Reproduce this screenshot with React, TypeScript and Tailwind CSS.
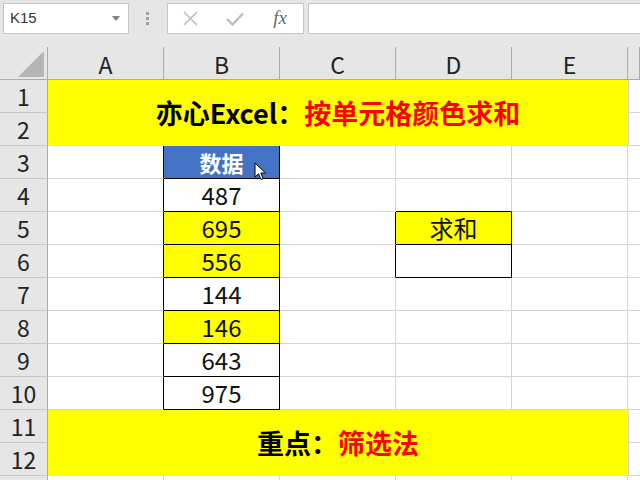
import React from "react";

const FONT = { fontFamily: '"Noto Sans CJK SC", "Noto Sans", sans-serif' };

const dataRows: { row: number; value: string; fill: "white" | "yellow" }[] = [
  { row: 4, value: "487", fill: "white" },
  { row: 5, value: "695", fill: "yellow" },
  { row: 6, value: "556", fill: "yellow" },
  { row: 7, value: "144", fill: "white" },
  { row: 8, value: "146", fill: "yellow" },
  { row: 9, value: "643", fill: "white" },
  { row: 10, value: "975", fill: "white" },
];

function RowHead({ n }: { n?: number }) {
  return (
    <div className="flex h-[33px] w-[48px] shrink-0 items-center justify-center border-r border-b border-r-[#ababab] border-b-[#c9c9c9] bg-[#e6e6e6] text-[23px] text-[#222]">
      {n}
    </div>
  );
}

function Cell({
  className = "",
  children,
}: {
  className?: string;
  children?: React.ReactNode;
}) {
  return (
    <div
      className={`flex h-[33px] w-[116px] shrink-0 items-center justify-center border-r border-b ${className}`}
    >
      {children}
    </div>
  );
}

function Filler({ className = "" }: { className?: string }) {
  return <div className={`h-[33px] flex-1 border-b border-[#d4d4d4] ${className}`} />;
}

function Banner({ rows, children }: { rows: [number, number]; children: React.ReactNode }) {
  return (
    <div className="flex">
      <div className="flex flex-col">
        <RowHead n={rows[0]} />
        <RowHead n={rows[1]} />
      </div>
      <div className="flex h-[66px] w-[580px] shrink-0 items-center justify-center bg-[#ffff00] text-[27px] font-bold">
        {children}
      </div>
      <div className="flex flex-1 flex-col border-l border-[#d4d4d4]">
        <Filler />
        <Filler />
      </div>
    </div>
  );
}

function Cursor() {
  return (
    <svg
      className="absolute left-[254px] top-[162px]"
      width="14"
      height="20"
      viewBox="0 0 14 20"
    >
      <path
        d="M1 1 L1 15 L4.5 11.8 L7 17.5 L9.2 16.5 L6.8 11 L11.5 11 Z"
        fill="#fff"
        stroke="#000"
        strokeWidth="1"
        strokeLinejoin="round"
      />
    </svg>
  );
}

export default function App() {
  const gray = "border-[#d4d4d4]";
  return (
    <div className="relative h-[480px] w-[640px] overflow-hidden bg-white" style={FONT}>
      {/* formula toolbar */}
      <div className="flex h-[47px] items-start bg-[#e6e6e6] pt-[3px] pl-[3px]">
        <div className="flex h-[31px] w-[126px] items-center justify-between border border-[#c6c6c6] bg-white pl-[6px] pr-[8px]">
          <span className="text-[15px] text-[#333]" style={{ fontFamily: '"Liberation Sans", sans-serif' }}>
            K15
          </span>
          <svg width="8" height="5" viewBox="0 0 8 5">
            <path d="M0 0 L8 0 L4 5 Z" fill="#808080" />
          </svg>
        </div>
        <div className="flex h-[31px] w-[38px] flex-col items-center justify-center gap-[2px] pr-[1px]">
          <span className="h-[3px] w-[3px] bg-[#a0a0a0]" />
          <span className="h-[3px] w-[3px] bg-[#a0a0a0]" />
          <span className="h-[3px] w-[3px] bg-[#a0a0a0]" />
        </div>
        <div className="flex h-[31px] w-[137px] items-center border border-[#c6c6c6] bg-white">
          <div className="flex w-[44px] justify-center">
            <svg width="15" height="15" viewBox="0 0 15 15">
              <path d="M1 1 L14 14 M14 1 L1 14" stroke="#bdbdbd" strokeWidth="1.6" />
            </svg>
          </div>
          <div className="flex w-[46px] justify-center">
            <svg width="18" height="14" viewBox="0 0 18 14">
              <path d="M1 7 L6.5 12.5 L17 1.5" stroke="#bdbdbd" strokeWidth="2.4" fill="none" />
            </svg>
          </div>
          <div className="flex w-[44px] justify-center">
            <span
              className="text-[19px] italic text-[#666]"
              style={{ fontFamily: '"Liberation Serif", serif' }}
            >
              fx
            </span>
          </div>
        </div>
        <div className="ml-[4px] h-[31px] flex-1 border border-r-0 border-[#c6c6c6] bg-white" />
      </div>

      {/* column headers */}
      <div className="flex h-[33px] bg-[#e6e6e6]">
        <div className="relative h-[33px] w-[48px] shrink-0 border-r border-b border-[#ababab]">
          <svg className="absolute left-[18px] top-[4px]" width="26" height="26" viewBox="0 0 26 26">
            <path d="M26 0 L26 26 L0 26 Z" fill="#b5b5b5" />
          </svg>
        </div>
        {["A", "B", "C", "D", "E"].map((c) => (
          <div
            key={c}
            className="flex h-[33px] w-[116px] shrink-0 items-center justify-center border-b border-b-[#ababab] text-[23px] text-[#222]"
          >
            <span className="flex h-full w-full items-center justify-center border-r border-[#ababab] pt-[2px]">
              {c}
            </span>
          </div>
        ))}
        <div className="h-[33px] flex-1 border-b border-r border-[#ababab]" />
      </div>

      <Banner rows={[1, 2]}>
        <span className="text-black">亦心Excel：</span>
        <span className="text-[#ff0000]">按单元格颜色求和</span>
      </Banner>

      {/* row 3 */}
      <div className="flex">
        <RowHead n={3} />
        <Cell className="border-r-black border-b-[#d4d4d4]" />
        <Cell className="border-black bg-[#4472c4] text-[22px] font-bold text-white">数据</Cell>
        <Cell className={gray} />
        <Cell className={gray} />
        <Cell className={gray} />
        <Filler />
      </div>

      {dataRows.map((r) => (
        <div key={r.row} className="flex">
          <RowHead n={r.row} />
          <Cell className="border-r-black border-b-[#d4d4d4]" />
          <Cell
            className={`border-black text-[24px] text-[#111] ${
              r.fill === "yellow" ? "bg-[#ffff00]" : "bg-white"
            }`}
          >
            {r.value}
          </Cell>
          <Cell
            className={
              r.row === 5 || r.row === 6
                ? "border-r-black border-b-[#d4d4d4]"
                : gray
            }
          />
          <Cell
            className={
              r.row === 5
                ? "border-black bg-[#ffff00] text-[24px] text-[#111]"
                : r.row === 6
                ? "border-black"
                : r.row === 4
                ? "border-r-[#d4d4d4] border-b-black"
                : gray
            }
          >
            {r.row === 5 ? "求和" : null}
          </Cell>
          <Cell className={gray} />
          <Filler />
        </div>
      ))}

      <Banner rows={[11, 12]}>
        <span className="text-black">重点：</span>
        <span className="text-[#ff0000]">筛选法</span>
      </Banner>

      {/* row 13, only its top edge is in view */}
      <div className="flex">
        <RowHead />
        <Cell className={gray} />
        <Cell className={gray} />
        <Cell className={gray} />
        <Cell className={gray} />
        <Cell className={gray} />
        <Filler />
      </div>

      <Cursor />
    </div>
  );
}
